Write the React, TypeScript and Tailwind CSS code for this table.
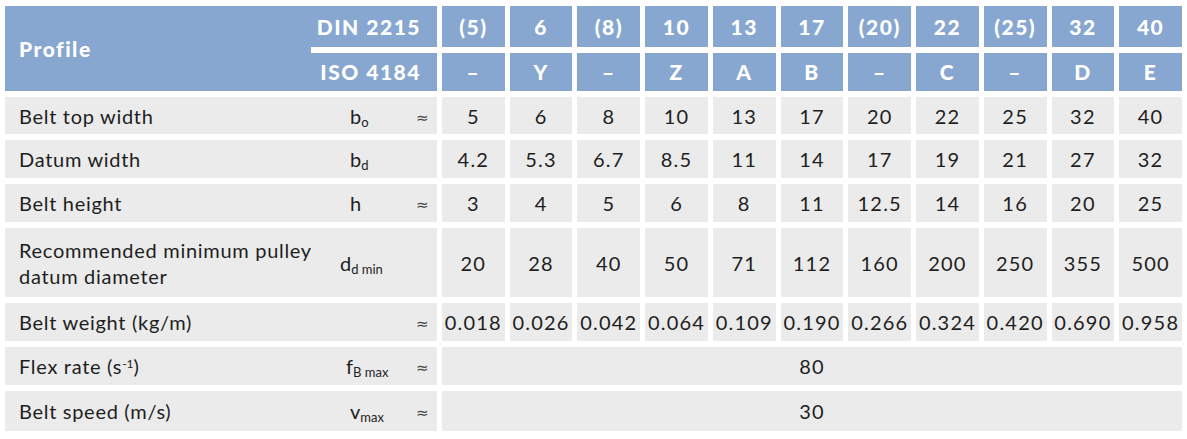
import React from "react";

const FONT = "font-['Futura','Century_Gothic','Lato',sans-serif]";
const HEAD = "bg-[#88a7d0] text-white font-black text-[21px] tracking-[1.5px]";
const CELL = "bg-[#ebebeb] flex items-center justify-center text-[20px] tracking-[1.2px] text-[#1e1e1e]";

const DIN = ["(5)", "6", "(8)", "10", "13", "17", "(20)", "22", "(25)", "32", "40"];
const ISO = ["–", "Y", "–", "Z", "A", "B", "–", "C", "–", "D", "E"];

type Row = {
  label: React.ReactNode;
  sym?: React.ReactNode;
  approx?: boolean;
  values?: string[];
  span?: string;
};

const Sub = ({ children }: { children: React.ReactNode }) => (
  <sub className="text-[13px] tracking-normal relative top-[3px]">{children}</sub>
);

const ROWS: Row[] = [
  {
    label: "Belt top width",
    sym: (
      <>
        b<Sub>o</Sub>
      </>
    ),
    approx: true,
    values: ["5", "6", "8", "10", "13", "17", "20", "22", "25", "32", "40"],
  },
  {
    label: "Datum width",
    sym: (
      <>
        b<Sub>d</Sub>
      </>
    ),
    values: ["4.2", "5.3", "6.7", "8.5", "11", "14", "17", "19", "21", "27", "32"],
  },
  {
    label: "Belt height",
    sym: "h",
    approx: true,
    values: ["3", "4", "5", "6", "8", "11", "12.5", "14", "16", "20", "25"],
  },
  {
    label: (
      <>
        Recommended minimum pulley
        <br />
        datum diameter
      </>
    ),
    sym: (
      <span className="-ml-[10px]">
        d<Sub>d min</Sub>
      </span>
    ),
    values: ["20", "28", "40", "50", "71", "112", "160", "200", "250", "355", "500"],
  },
  {
    label: "Belt weight (kg/m)",
    approx: true,
    values: ["0.018", "0.026", "0.042", "0.064", "0.109", "0.190", "0.266", "0.324", "0.420", "0.690", "0.958"],
  },
  {
    label: (
      <>
        Flex rate (s<sup className="text-[12px] tracking-normal">-1</sup>)
      </>
    ),
    sym: (
      <span className="-ml-[4px]">
        f<Sub>B max</Sub>
      </span>
    ),
    approx: true,
    span: "80",
  },
  {
    label: "Belt speed (m/s)",
    sym: (
      <>
        v<Sub>max</Sub>
      </>
    ),
    approx: true,
    span: "30",
  },
];

export default function App() {
  return (
    <div className={`bg-white w-[1187px] h-[439px] pt-[6px] pl-[5px] ${FONT}`}>
      <div className="grid w-[1177px] grid-cols-[432px_repeat(11,minmax(0,1fr))] grid-rows-[41px_38px_37px_38px_38px_69px_38px_38px_40px] gap-x-[5px] gap-y-[6px]">
        {/* header: profile block with DIN / ISO labels */}
        <div className="row-span-2 flex">
          <div className={`${HEAD} flex-1 flex items-center pl-[14px]`}>Profile</div>
          <div className="w-[126px] flex flex-col gap-[6px]">
            <div className={`${HEAD} h-[41px] flex items-center justify-end pr-[16px]`}>DIN 2215</div>
            <div className={`${HEAD} flex-1 flex items-center justify-end pr-[16px]`}>ISO 4184</div>
          </div>
        </div>
        {DIN.map((d) => (
          <div key={"din" + d} className={`${HEAD} flex items-center justify-center`}>
            {d}
          </div>
        ))}
        {ISO.map((d, i) => (
          <div key={"iso" + i} className={`${HEAD} flex items-center justify-center`}>
            {d}
          </div>
        ))}

        {ROWS.map((r, ri) => (
          <React.Fragment key={ri}>
            <div className="bg-[#ebebeb] flex items-center pl-[14px] pr-[8px] text-[20px] tracking-[0.7px] text-[#1e1e1e] leading-[26px]">
              <div className="w-[331px]">{r.label}</div>
              <div className="flex-1 whitespace-nowrap tracking-normal">{r.sym}</div>
              <div className="w-[13px] pt-[4px] font-['DejaVu_Sans',sans-serif] text-[15px] text-[#444] tracking-normal">
                {r.approx ? "≈" : ""}
              </div>
            </div>
            {r.values
              ? r.values.map((v, i) => (
                  <div key={i} className={CELL}>
                    {v}
                  </div>
                ))
              : (
                <div className={`${CELL} col-span-11`}>{r.span}</div>
              )}
          </React.Fragment>
        ))}
      </div>
    </div>
  );
}
